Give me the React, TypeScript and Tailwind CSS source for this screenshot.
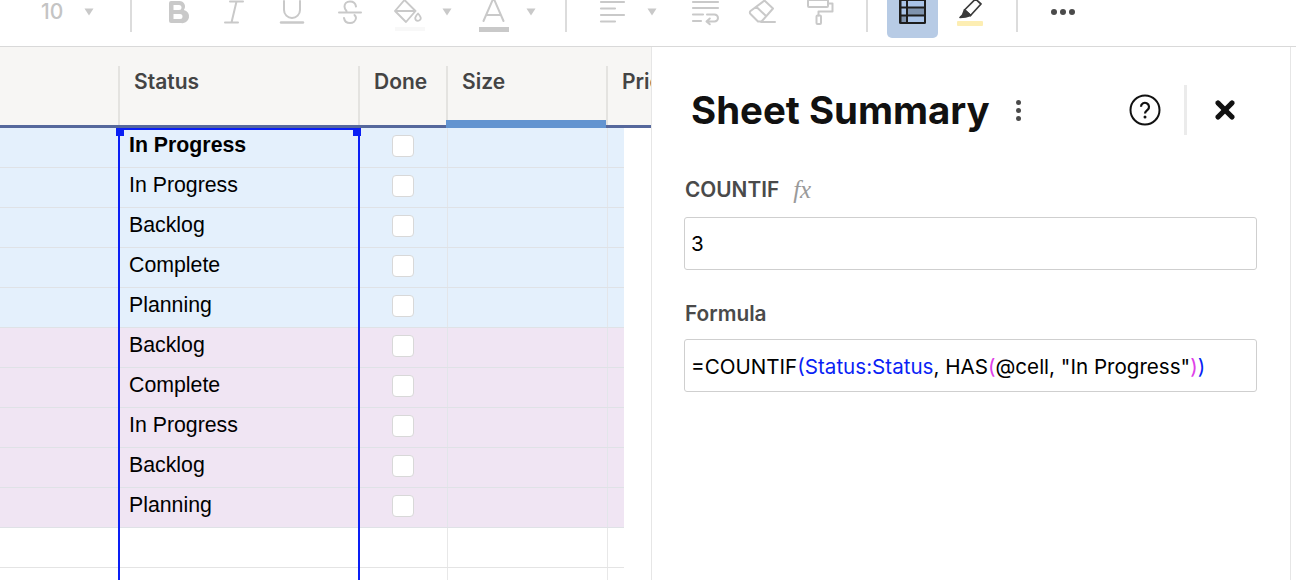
import { X } from 'lucide-react'

const rows = [
  { status: 'In Progress', bold: true, tone: 'blue' },
  { status: 'In Progress', tone: 'blue' },
  { status: 'Backlog', tone: 'blue' },
  { status: 'Complete', tone: 'blue' },
  { status: 'Planning', tone: 'blue' },
  { status: 'Backlog', tone: 'purple' },
  { status: 'Complete', tone: 'purple' },
  { status: 'In Progress', tone: 'purple' },
  { status: 'Backlog', tone: 'purple' },
  { status: 'Planning', tone: 'purple' },
]

function Caret({ className }: { className: string }) {
  return (
    <svg width="10" height="8" viewBox="0 0 10 8" className={className}>
      <path d="M0.5 0.5h9L5 7.5z" fill="#c9c9c9" />
    </svg>
  )
}

function Sep({ className }: { className: string }) {
  return <div className={`w-[2px] h-8 shrink-0 self-start bg-[#dcdcdc] ${className}`} />
}

function Icon({ className, children }: { className: string; children: React.ReactNode }) {
  return (
    <svg
      width="24"
      height="24"
      viewBox="0 0 24 24"
      fill="none"
      stroke="#c9c9c9"
      strokeWidth="2"
      strokeLinecap="round"
      strokeLinejoin="round"
      className={`shrink-0 overflow-visible ${className}`}
    >
      {children}
    </svg>
  )
}

function Toolbar() {
  return (
    <div className="flex items-start h-[47px] border-b border-[#d9d9d9] bg-white overflow-hidden">
      <div className="flex items-center h-6 font-['Inter',sans-serif] font-medium text-[21px] text-[#c4c4c4]">
        <span className="ml-[41px] w-[23px]">10</span>
        <Caret className="ml-5" />
      </div>
      <Sep className="ml-9" />
      <div className="flex items-center h-6">
        <Icon className="ml-[33px]">
          <path
            d="M5 1h8.500a5.500 5.500 0 0 1 4.300 8.900A6 6 0 0 1 15 23H5a2 2 0 0 1-2-2V3a2 2 0 0 1 2-2z M7.500 5v5h5.500a2.500 2.500 0 0 0 0-5z M7.500 14v5h6.500a2.500 2.500 0 0 0 0-5z"
            transform="translate(1 0)"
            fill="#c9c9c9"
            fillRule="evenodd"
            stroke="none"
          />
        </Icon>
        <Icon className="ml-8">
          <path d="M9 1.500h13M4 22.500h13M15.500 1.500l-5 21" />
        </Icon>
        <Icon className="ml-[35px]">
          <path d="M4 1v9a8 8 0 0 0 16 0V1" />
          <path d="M1 22.500h22" strokeWidth="2.400" />
        </Icon>
        <Icon className="ml-[34px]">
          <path d="M18 6.500C17.500 3.500 15 1.500 12 1.500 8.500 1.500 6.500 4 6.500 6.500c0 1.500.5 3 2 4.500M1 12.500h22M16.500 15c1 1 1.500 2 1.500 3-.3 3-3 5-6 5-3.500 0-5.500-2-6-5" />
        </Icon>
        <Icon className="ml-[34px]">
          <path d="M8.500 0 19.500 11 10 22-1 11zM-1 11h20.500" strokeWidth="1.900" />
          <path d="M22 13.500c1.800 2 2.800 3.200 2.800 4.500a2.800 2.800 0 0 1-5.600 0c0-1.300 1-2.500 2.800-4.500z" strokeWidth="1.800" />
          <rect x="-1" y="27" width="30" height="4" fill="#f8f8f8" stroke="none" />
        </Icon>
        <Caret className="ml-[22px]" />
        <Icon className="ml-[30px]">
          <path d="M1.500 21 11.500 -2l10 23M5 15h14" />
          <rect x="-3" y="27" width="30" height="5" fill="#c9c9c9" stroke="none" />
        </Icon>
        <Caret className="ml-5" />
      </div>
      <Sep className="ml-[29px]" />
      <div className="flex items-center h-6">
        <Icon className="ml-[33px]">
          <path d="M1 2h23M1 8.500h14M1 15h23M1 21.500h14" strokeWidth="2.200" />
        </Icon>
        <Caret className="ml-[23px]" />
        <Icon className="ml-9">
          <path d="M0 2h25M0 8h25M0 14.500h10M0 21h8" strokeWidth="2.200" />
          <path d="M14 14.500h7.500a3.300 3.300 0 0 1 0 7H14m2.800-3L13.500 21.500l3.300 2.800" />
        </Icon>
        <Icon className="ml-[33px]">
          <path d="M14.500 0.500 23 8.500 11.500 21.500H8L0.500 14a2 2 0 0 1 0-3zM6.500 7l9 8.500M11 22h14" />
        </Icon>
        <Icon className="ml-[34px]">
          <rect x="0" y="0" width="20" height="7" rx="1" />
          <path d="M20 3.500h4.500v8H10.500v4" />
          <rect x="8.500" y="15.500" width="4.500" height="8.500" rx="1" />
        </Icon>
      </div>
      <Sep className="ml-[34px]" />
      <div className="ml-[19px] w-[51px] h-[38px] shrink-0 bg-[#b7cbe5] rounded-b-[5px] flex justify-center">
        <svg width="27" height="25" viewBox="0 0 27 25">
          <rect x="0" y="-2" width="27" height="26" fill="#1d1d1d" rx="1.500" />
          <rect x="2.500" y="1" width="4.500" height="5.500" fill="#a9c3e7" />
          <rect x="9" y="1" width="16" height="5.500" fill="#a9c3e7" />
          <rect x="2.500" y="8.500" width="4.500" height="6" fill="#a9c3e7" />
          <rect x="9" y="8.500" width="16" height="6" fill="#7f93ae" />
          <rect x="2.500" y="16.500" width="4.500" height="5.500" fill="#7f93ae" />
          <rect x="9" y="16.500" width="16" height="5.500" fill="#a9c3e7" />
        </svg>
      </div>
      <div className="ml-5 w-6 shrink-0 flex flex-col items-center">
        <svg width="24" height="19" viewBox="0 0 24 19" fill="none" stroke="#3a3a3a" strokeWidth="1.700" strokeLinejoin="round">
          <path d="m17.500 -1 5.500 5-10.500 11.500-6-5.500z" />
          <path d="m6.500 10 6 5.500-5 1.500-5.500.5L4.500 15z" fill="#3a3a3a" />
        </svg>
        <div className="w-[26px] h-[5px] mt-[2px] bg-[#fdeeb3] rounded-[1px]" />
      </div>
      <Sep className="ml-[34px]" />
      <div className="ml-[33px] w-6 h-6 shrink-0 flex items-center justify-between">
        <span className="size-[6px] rounded-full bg-[#4a4a4a]" />
        <span className="size-[6px] rounded-full bg-[#4a4a4a]" />
        <span className="size-[6px] rounded-full bg-[#4a4a4a]" />
      </div>
    </div>
  )
}

function HeaderCell({ label, className }: { label: string; className: string }) {
  return (
    <div className={`shrink-0 h-[59px] border-l-2 border-[#e4e3e0] whitespace-nowrap text-[21px] font-semibold text-[#444444] ${className}`}>
      {label}
    </div>
  )
}

function Grid() {
  return (
    <div className="relative w-[651px] shrink-0 overflow-hidden">
      {/* Header */}
      <div className="h-[81px] bg-[#f7f6f4] border-b-[3px] border-[#56689c] pt-[19px] flex font-['Inter',sans-serif] relative">
        <div className="w-[118px] shrink-0" />
        <HeaderCell label="Status" className="w-[240px] pl-[14px] leading-[32px]" />
        <HeaderCell label="Done" className="w-[88px] pl-[14px] leading-[32px]" />
        <HeaderCell label="Size" className="w-[160px] pl-[14px] leading-[32px]" />
        <HeaderCell label="Price" className="w-[160px] pl-[14px] leading-[32px]" />
        <div className="absolute left-[446px] top-[73px] w-[160px] h-2 bg-[#6394d0]" />
      </div>

      {/* Rows */}
      {rows.map((row, i) => (
        <div
          key={i}
          className={`flex w-[624px] h-10 border-b border-[#dfe2e6] font-['Liberation_Sans',sans-serif] text-[21.3px] text-black ${row.tone === 'blue' ? 'bg-[#e4f0fc]' : 'bg-[#f0e5f3]'}`}
        >
          <div className="w-[119px] shrink-0" />
          <div className={`w-[240px] shrink-0 pl-[10px] leading-[34px] ${row.bold ? 'font-bold' : ''}`}>{row.status}</div>
          <div className="w-[88px] shrink-0 flex justify-center pt-[7px]">
            <div className="size-[22px] bg-white border border-[#d8d8d8] rounded-[4px]" />
          </div>
          <div className="w-[160px] shrink-0 border-l border-[#e3e6ea]" />
          <div className="flex-1 border-l border-[#e3e6ea]" />
        </div>
      ))}
      {[0, 1].map((i) => (
        <div key={i} className="flex w-[624px] h-10 border-b border-[#e4e4e4]">
          <div className="w-[447px] shrink-0" />
          <div className="w-[160px] shrink-0 border-l border-[#e8e8e8]" />
          <div className="flex-1 border-l border-[#e8e8e8]" />
        </div>
      ))}

      {/* Column selection */}
      <div className="absolute left-[118px] top-[81px] w-[242px] h-[500px] border-2 border-b-0 border-[#0a1ff5]" />
      <div className="absolute left-[116px] top-[81px] size-2 bg-[#0a1ff5]" />
      <div className="absolute left-[353px] top-[81px] size-2 bg-[#0a1ff5]" />
    </div>
  )
}

function Summary() {
  return (
    <div className="w-[640px] shrink-0 h-[533px] border-l border-r border-[#e6e6e6] font-['Inter',sans-serif] overflow-hidden">
      <div className="flex items-center h-[50px] mt-[38px] pl-[39px]">
        <h1 className="text-[38.4px] font-bold text-[#111111] leading-none whitespace-nowrap">Sheet Summary</h1>
        <div className="ml-[26px] flex flex-col gap-[3px]">
          <span className="size-[5px] rounded-full bg-[#4a4a4a]" />
          <span className="size-[5px] rounded-full bg-[#4a4a4a]" />
          <span className="size-[5px] rounded-full bg-[#4a4a4a]" />
        </div>
        <svg width="32" height="32" viewBox="0 0 32 32" fill="none" stroke="#111111" strokeWidth="2" className="ml-[108px]">
          <circle cx="16" cy="16" r="14.500" />
          <path d="M12 12.800a4 4 0 1 1 6.500 3.100c-1.500 1.200-2.500 1.700-2.500 3.500" strokeWidth="2.200" />
          <circle cx="16" cy="23" r="1.500" fill="#111111" stroke="none" />
        </svg>
        <div className="ml-[23px] w-[3px] h-[50px] bg-[#ebebeb]" />
        <X size={28} strokeWidth={4.500} color="#111111" className="ml-[24px]" />
      </div>

      <div className="ml-[32px] w-[573px] mt-[43px]">
        <div className="flex items-center h-6 gap-[14px] pl-px">
          <span className="text-[20.8px] font-semibold text-[#4a4a4a]">COUNTIF</span>
          <span className="font-['Liberation_Serif',serif] italic text-[25px] leading-6 text-[#9a9a9a]">fx</span>
        </div>
        <div className="mt-[15px] h-[53px] bg-white border border-[#cfcfcf] rounded-[3px] pl-[6px] leading-[52px] text-[20.6px] text-black">3</div>
        <div className="mt-[32px] h-6 pl-px text-[20.8px] font-semibold text-[#4a4a4a] leading-6">Formula</div>
        <div className="mt-[13px] h-[53px] bg-white border border-[#cfcfcf] rounded-[3px] pl-[6px] leading-[54px] text-[20.6px] text-black whitespace-nowrap">
          =COUNTIF
          <span className="text-[#0a1ff5]">(Status:Status</span>
          , HAS
          <span className="text-[#e040e8]">(</span>
          @cell, "In Progress"
          <span className="text-[#e040e8]">)</span>
          <span className="text-[#0a1ff5]">)</span>
        </div>
      </div>
    </div>
  )
}

export default function App() {
  return (
    <div className="w-[1296px] h-[580px] overflow-hidden bg-white">
      <Toolbar />
      <div className="flex h-[533px] overflow-hidden">
        <Grid />
        <Summary />
      </div>
    </div>
  )
}
